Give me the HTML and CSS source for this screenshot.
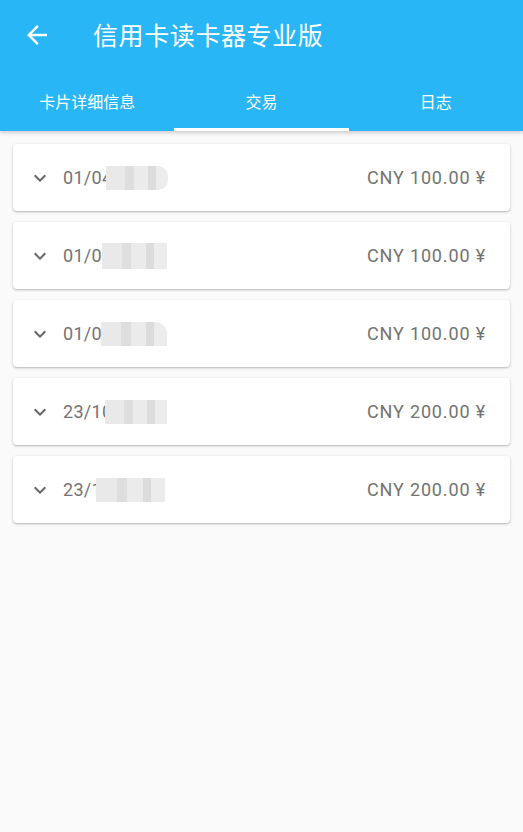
FILE: index.html
```html
<!DOCTYPE html>
<html lang="zh">
<head>
    <meta charset="UTF-8">
    <title>信用卡读卡器专业版</title>
    <link rel="stylesheet" href="styles.css">
</head>
<body>
    <header class="appbar">
        <div class="toolbar">
            <button class="back" aria-label="返回">
                <svg viewBox="0 0 24 24" width="30" height="30"><path d="M20 11H7.83l5.59-5.59L12 4l-8 8 8 8 1.41-1.41L7.83 13H20v-2z" fill="#fff"/></svg>
            </button>
            <h1>信用卡读卡器专业版</h1>
        </div>
        <nav class="tabs">
            <div class="tab">卡片详细信息</div>
            <div class="tab active">交易</div>
            <div class="tab">日志</div>
        </nav>
    </header>

    <main class="list">
        <div class="card">
            <svg class="chev" viewBox="0 0 24 24" width="24" height="24"><path d="M16.59 8.59L12 13.17 7.41 8.59 6 10l6 6 6-6z"/></svg>
            <span class="date">01/04</span><span class="mask m1"></span>
            <span class="amount">CNY 100.00 ¥</span>
        </div>
        <div class="card">
            <svg class="chev" viewBox="0 0 24 24" width="24" height="24"><path d="M16.59 8.59L12 13.17 7.41 8.59 6 10l6 6 6-6z"/></svg>
            <span class="date">01/0</span><span class="mask m2"></span>
            <span class="amount">CNY 100.00 ¥</span>
        </div>
        <div class="card">
            <svg class="chev" viewBox="0 0 24 24" width="24" height="24"><path d="M16.59 8.59L12 13.17 7.41 8.59 6 10l6 6 6-6z"/></svg>
            <span class="date">01/0</span><span class="mask m3"></span>
            <span class="amount">CNY 100.00 ¥</span>
        </div>
        <div class="card">
            <svg class="chev" viewBox="0 0 24 24" width="24" height="24"><path d="M16.59 8.59L12 13.17 7.41 8.59 6 10l6 6 6-6z"/></svg>
            <span class="date">23/10</span><span class="mask m4"></span>
            <span class="amount">CNY 200.00 ¥</span>
        </div>
        <div class="card">
            <svg class="chev" viewBox="0 0 24 24" width="24" height="24"><path d="M16.59 8.59L12 13.17 7.41 8.59 6 10l6 6 6-6z"/></svg>
            <span class="date">23/1</span><span class="mask m5"></span>
            <span class="amount">CNY 200.00 ¥</span>
        </div>
    </main>
</body>
</html>
```

FILE: styles.css
```css
body {
    margin: 0;
    background: #fafafa;
    font-family: Roboto, "Noto Sans CJK SC", sans-serif;
    height: 832px;
    overflow: hidden;
}
.appbar {
    background: #29b6f6;
    color: #ffffff;
    box-shadow: 0 2px 4px rgba(0, 0, 0, 0.18);
    position: relative;
    z-index: 1;
}
.toolbar {
    height: 71px;
    display: flex;
    align-items: center;
}
.back {
    width: 30px;
    height: 30px;
    margin-left: 22px;
    margin-top: -2px;
    padding: 0;
    border: none;
    background: none;
    display: flex;
}
.toolbar h1 {
    margin: -4px 0 0 41px;
    font-size: 25px;
    font-weight: 400;
    font-family: "Noto Sans CJK SC", sans-serif;
    letter-spacing: 0.6px;
}
.tabs {
    height: 60px;
    display: grid;
    grid-template-columns: repeat(3, 1fr);
}
.tab {
    display: flex;
    align-items: center;
    justify-content: center;
    font-size: 16px;
    font-family: "Noto Sans CJK SC", sans-serif;
    border-bottom: 3px solid transparent;
    padding-top: 3px;
}
.tab.active {
    border-bottom-color: #ffffff;
}
.list {
    padding: 13px 13px 0;
    display: flex;
    flex-direction: column;
    gap: 11px;
}
.card {
    height: 67px;
    background: #ffffff;
    border-radius: 4px;
    box-shadow: 0 1px 3px rgba(0, 0, 0, 0.22), 0 1px 1px rgba(0, 0, 0, 0.08);
    display: flex;
    align-items: center;
    padding: 0 24px 0 15px;
    color: #737373;
    font-size: 18px;
}
.chev {
    fill: #666666;
    margin-right: 11px;
}
.date {
    letter-spacing: 0.3px;
}
.mask {
    display: inline-block;
    height: 24px;
    background:
        linear-gradient(90deg, #e9e9e9 0 30%, #dedede 30% 45%, #ebebeb 45% 68%, #dcdcdc 68% 80%, #ececec 80%);
}
.m1 { width: 62px; margin-left: -6px; border-radius: 0 10px 10px 0; }
.m2 { width: 65px; height: 26px; }
.m3 { width: 66px; margin-left: -1px; border-radius: 0 12px 0 0; }
.m4 { width: 62px; margin-left: -7px; }
.m5 { width: 69px; margin-left: -6px; }
.amount {
    margin-left: auto;
    letter-spacing: 0.85px;
}
```
